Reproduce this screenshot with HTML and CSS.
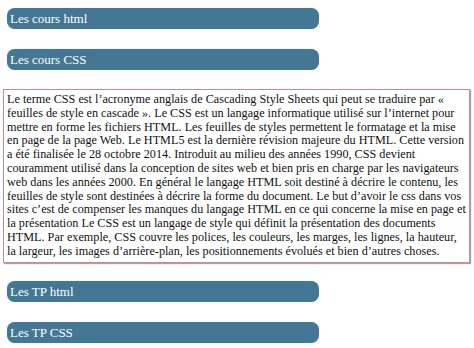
FILE: index.html
```html
<!DOCTYPE html>
<html lang="fr">
<head>
<meta charset="utf-8">
<link rel="stylesheet" href="styles.css">
</head>
<body>
<div class="bar">Les cours html</div>
<div class="bar">Les cours CSS</div>
<div class="text-box">Le terme CSS est l’acronyme anglais de Cascading Style Sheets qui peut se traduire par « feuilles de style en cascade ». Le CSS est un langage informatique utilisé sur l’internet pour mettre en forme les fichiers HTML. Les feuilles de styles permettent le formatage et la mise en page de la page Web. Le HTML5 est la dernière révision majeure du HTML. Cette version a été finalisée le 28 octobre 2014. Introduit au milieu des années 1990, CSS devient couramment utilisé dans la conception de sites web et bien pris en charge par les navigateurs web dans les années 2000. En général le langage HTML soit destiné à décrire le contenu, les feuilles de style sont destinées à décrire la forme du document. Le but d’avoir le css dans vos sites c’est de compenser les manques du langage HTML en ce qui concerne la mise en page et la présentation Le CSS est un langage de style qui définit la présentation des documents HTML. Par exemple, CSS couvre les polices, les couleurs, les marges, les lignes, la hauteur, la largeur, les images d’arrière-plan, les positionnements évolués et bien d’autres choses.</div>
<div class="bar">Les TP html</div>
<div class="bar">Les TP CSS</div>
</body>
</html>
```
FILE: styles.css
```css
html, body {
  background: #ffffff;
}
body {
  margin: 0;
  padding: 8px 5px 0 3px;
  font-family: "Liberation Serif", "Times New Roman", serif;
  display: flex;
  flex-direction: column;
  align-items: flex-start;
}
.bar {
  margin-left: 4px;
  width: 309px;
  height: 21px;
  line-height: 21px;
  padding-left: 3px;
  border-radius: 8px;
  background: #447793;
  color: #ffffff;
  font-family: "Liberation Serif", "Times New Roman", serif;
  font-size: 13px;
  margin-bottom: 20px;
  box-shadow: 0 0 1px #8fb6cc;
}
.bar:nth-of-type(2) {
  margin-bottom: 19px;
}
.text-box {
  width: 459px;
  border: 1px solid #c98a96;
  box-shadow: 1px 1px 1px #b0a0a4;
  padding: 3px 3px 3px 3px;
  font-family: "Liberation Serif", "Times New Roman", serif;
  font-size: 12.2px;
  line-height: 13.8px;
  color: #111111;
  margin-bottom: 18px;
}
```
